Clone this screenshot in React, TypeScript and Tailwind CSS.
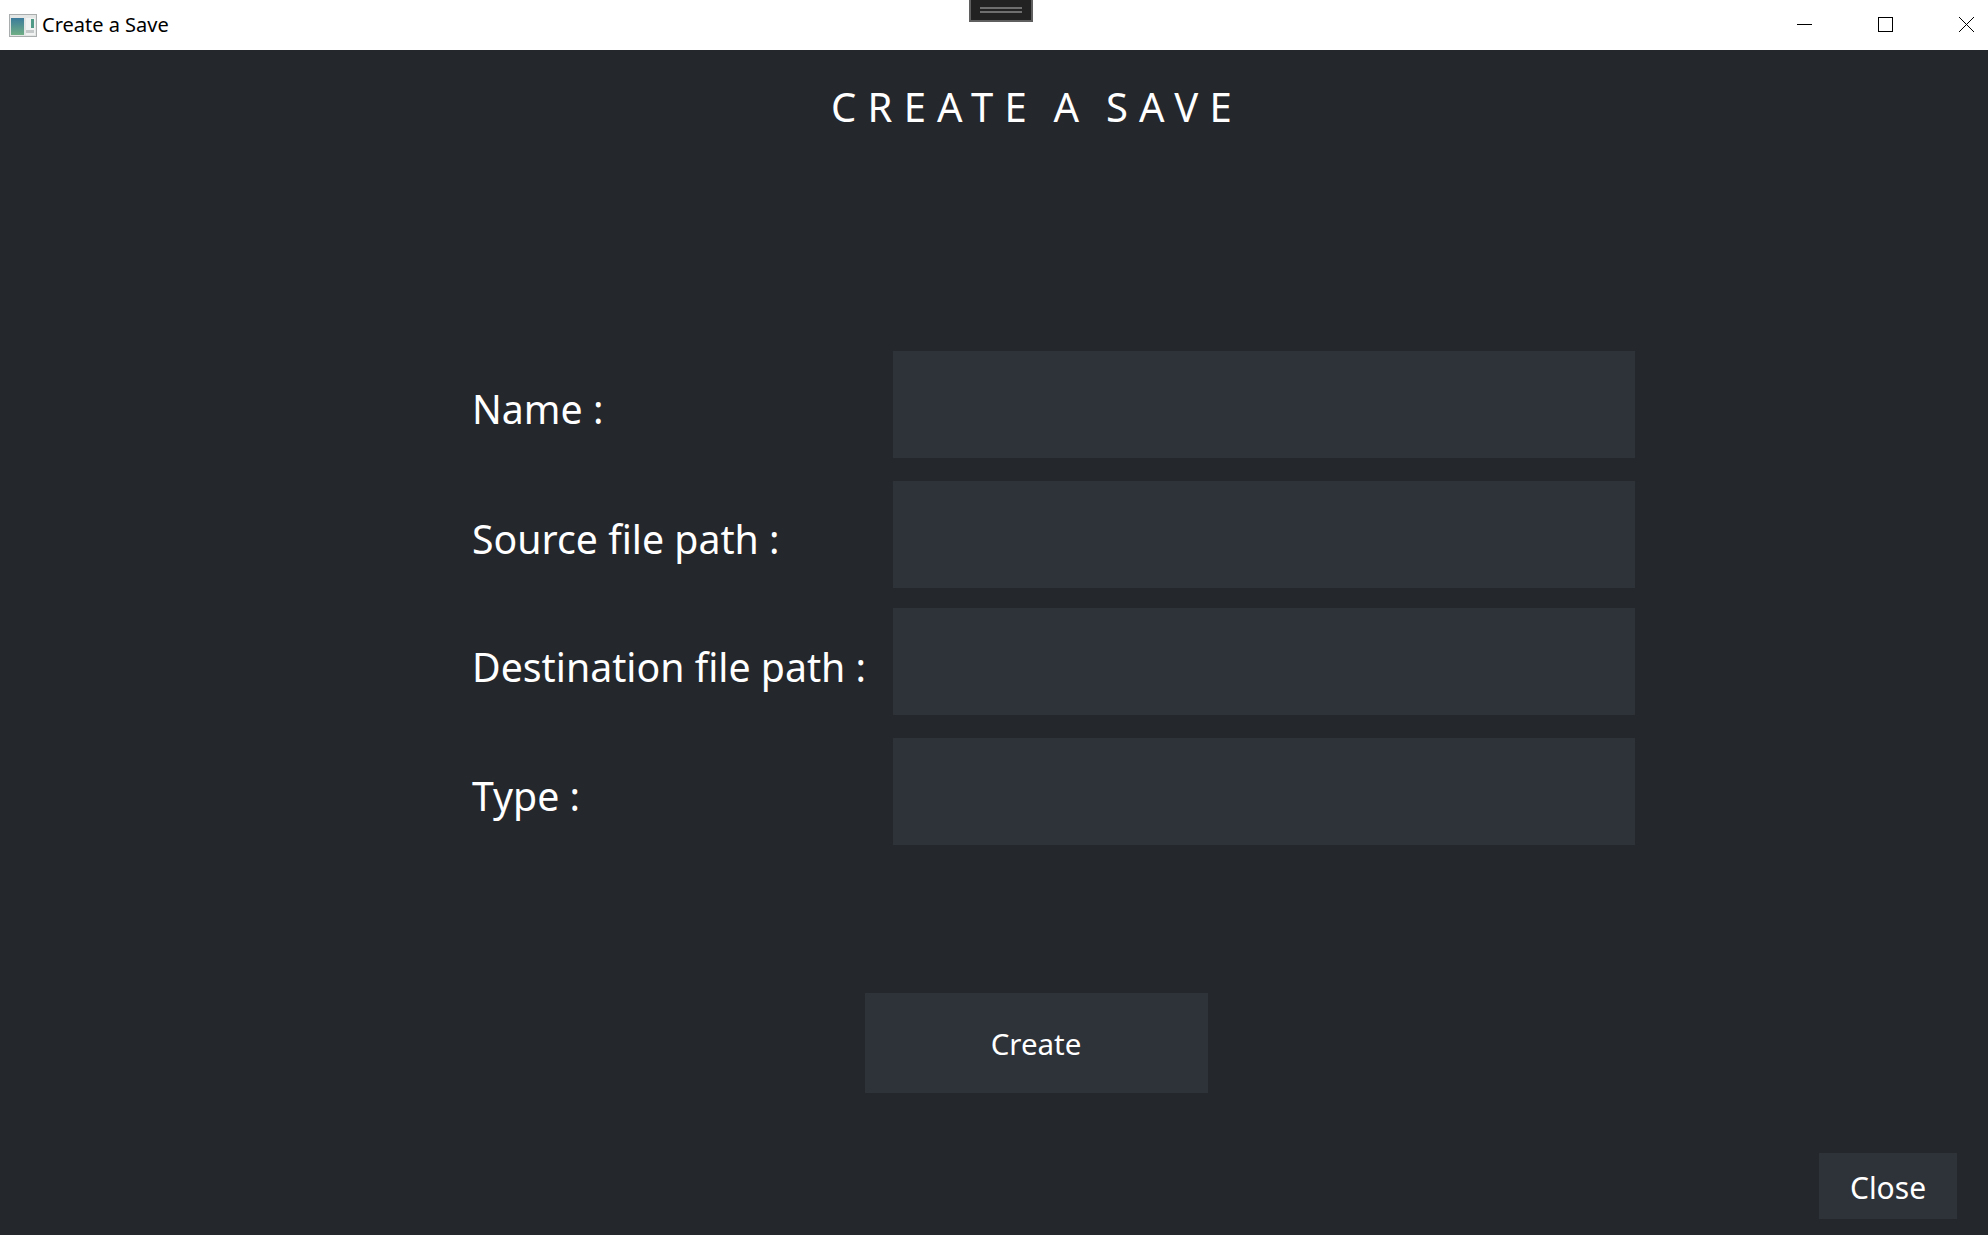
const rows = [
  { label: "Name :", top: "mt-[221px]", pad: "pt-[8px]" },
  { label: "Source file path :", top: "mt-[23px]", pad: "pt-[8px]" },
  { label: "Destination file path :", top: "mt-[20px]", pad: "pt-[10px]" },
  { label: "Type :", top: "mt-[23px]", pad: "pt-[8px]" },
]

function AppIcon() {
  return (
    <svg width="28" height="23" viewBox="0 0 28 23" className="shrink-0">
      <rect x="0.5" y="0.5" width="27" height="22" fill="#e4e6e6" stroke="#a9adad" />
      <defs>
        <linearGradient id="pane" x1="0" y1="0" x2="0" y2="1">
          <stop offset="0" stopColor="#3b7b9b" />
          <stop offset="1" stopColor="#6fae84" />
        </linearGradient>
      </defs>
      <rect x="2" y="4" width="13" height="17" fill="url(#pane)" />
      <rect x="17" y="4" width="9" height="17" fill="#f1f2f2" />
      <rect x="22" y="5" width="3" height="9" fill="#4f9a86" />
      <rect x="17" y="16" width="8" height="3" fill="#c5c8c8" />
    </svg>
  )
}

export default function App() {
  return (
    <div className="flex h-[1235px] w-[1988px] flex-col overflow-hidden bg-white font-['Noto_Sans','Open_Sans',sans-serif]">
      <header className="relative flex h-[50px] shrink-0 items-center bg-white pl-[9px]">
        <AppIcon />
        <span className="ml-[5px] text-[20px] text-black">Create a Save</span>
        <div className="absolute top-0 left-[969px] flex h-[22px] w-[64px] items-center justify-center border-2 border-t-0 border-[#5f5f5f] bg-[#222222]">
          <div className="h-[6px] w-[42px] border-y-2 border-[#6e6e6e]" />
        </div>
        <div className="ml-auto flex items-center">
          <svg width="228" height="50" viewBox="0 0 228 50" fill="none" stroke="#000" strokeWidth="1">
            <path d="M37 24.5h15" />
            <rect x="118.5" y="17.5" width="14" height="14" />
            <path d="M199 17l15 15M214 17l-15 15" />
          </svg>
        </div>
      </header>
      <main className="flex flex-1 flex-col bg-[#24272c] text-white">
        <h1 className="mt-[34px] pl-[86px] text-center text-[40px] leading-[46px] font-normal tracking-[11.2px] [word-spacing:-6px]">CREATE A SAVE</h1>
        <div className="flex flex-col pr-[353px] pl-[472px]">
          {rows.map((row, index) => (
            <div key={index} className={`flex items-center ${row.top}`}>
              <label className={`w-[421px] text-[39.25px] leading-[50px] ${row.pad}`}>{row.label}</label>
              <input className="h-[107px] w-[742px] bg-[#2e3239] outline-none" />
            </div>
          ))}
        </div>
        <div className="mt-[148px] flex justify-center pl-[84px]">
          <button className="h-[100px] w-[343px] bg-[#2e3239] pt-[3px] text-[29.5px]">Create</button>
        </div>
        <div className="mt-[60px] flex justify-end pr-[31px]">
          <button className="h-[66px] w-[138px] bg-[#2e3239] pt-[2px] text-[30px]">Close</button>
        </div>
      </main>
    </div>
  )
}
